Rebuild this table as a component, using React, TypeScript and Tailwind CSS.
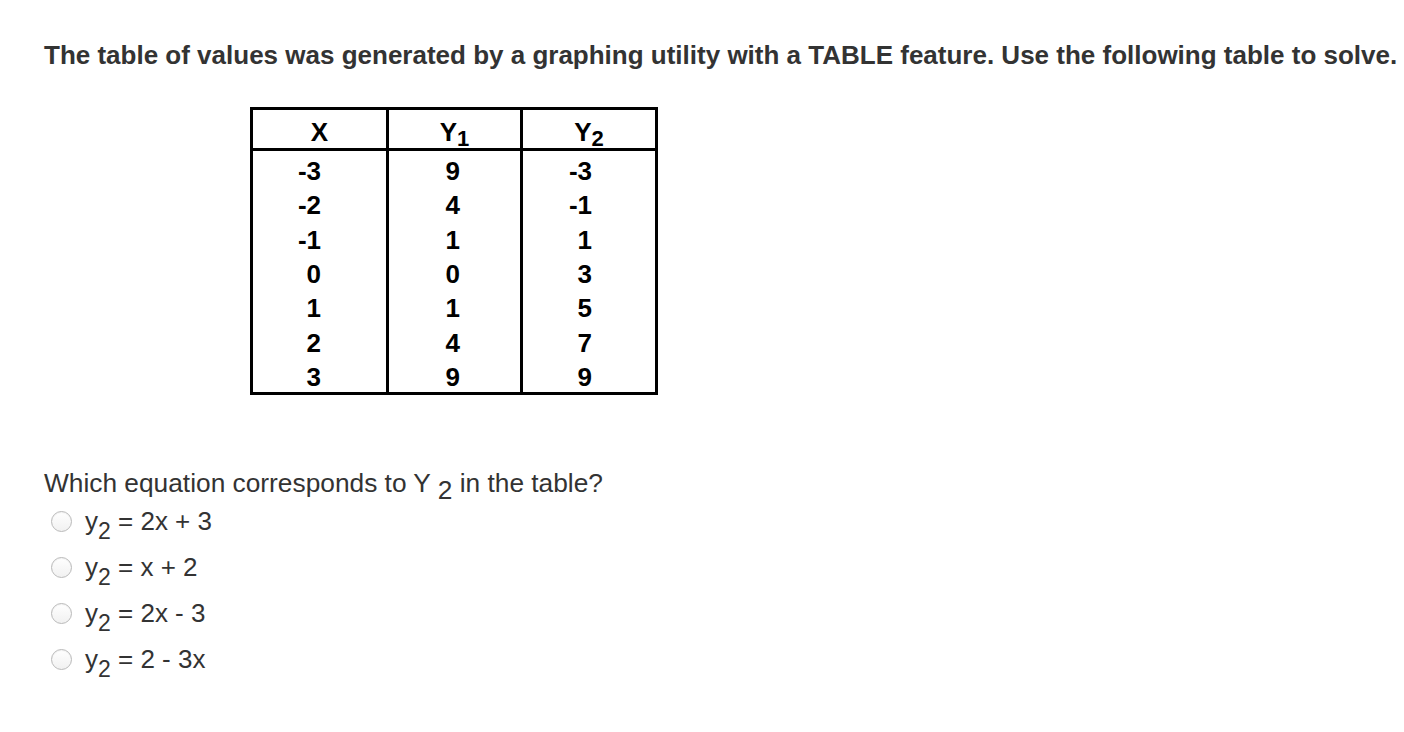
import React from 'react';

const xs = ['-3', '-2', '-1', '0', '1', '2', '3'];
const y1 = ['9', '4', '1', '0', '1', '4', '9'];
const y2 = ['-3', '-1', '1', '3', '5', '7', '9'];

const options = ['= 2x + 3', '= x + 2', '= 2x - 3', '= 2 - 3x'];

function Column({ head, sub, values, pr, last }: { head: string; sub?: string; values: string[]; pr: string; last?: boolean }) {
  return (
    <div className={`flex flex-col ${last ? '' : 'border-r-[3px] border-black'}`}>
      <div className="h-[41px] flex items-end justify-center pb-[3px] border-b-[3px] border-black text-[26px] leading-none">
        <span>{head}</span>
        {sub && <span className="text-[22px] relative top-[5px]">{sub}</span>}
      </div>
      <div className={`flex flex-col items-end ${pr}`}>
        {values.map((v, i) => (
          <div key={i} className="h-[34.3px] flex items-center text-[26px] leading-none">
            <span className="relative top-[3px]">{v}</span>
          </div>
        ))}
      </div>
    </div>
  );
}

export default function App() {
  return (
    <div className="min-h-screen bg-white text-[#333] pl-[44px] pt-[41px]" style={{ fontFamily: '"Liberation Sans", Arial, sans-serif' }}>
      <h1 className="text-[26px] leading-[28px] font-bold">
        The table of values was generated by a graphing utility with a TABLE feature. Use the following table to solve.
      </h1>

      {/* table image */}
      <div className="ml-[206px] mt-[38px] w-[408px] h-[288px] border-[3px] border-black grid grid-cols-[136px_134px_1fr] font-bold text-black overflow-hidden">
        <Column head="X" values={xs} pr="pr-[65px]" />
        <Column head="Y" sub="1" values={y1} pr="pr-[60px]" />
        <Column head="Y" sub="2" values={y2} pr="pr-[63px]" last />
      </div>

      <p className="mt-[74px] text-[26.3px] leading-[28px]">
        Which equation corresponds to Y <span className="relative top-[7px]">2</span> in the table?
      </p>

      <div className="mt-[10px] flex flex-col gap-[18px]">
        {options.map((o, i) => (
          <label key={i} className="flex items-center h-[28px]">
            <span className="ml-[7px] w-[21px] h-[21px] rounded-full border border-[#b9b9b9] bg-gradient-to-b from-white to-[#f1f1f1] shadow-[inset_0_1px_1px_rgba(0,0,0,0.05)]" />
            <span className="ml-[13px] text-[26px] leading-[28px] whitespace-pre">
              y<span className="text-[23px] relative top-[9px]">2</span> {o}
            </span>
          </label>
        ))}
      </div>
    </div>
  );
}
